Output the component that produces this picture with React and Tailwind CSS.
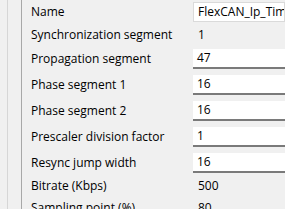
import React from "react";

// timing settings for the CAN controller, laid out like the property grid
const rows = [
  { label: "Name", value: "FlexCAN_Ip_TimingConfig", kind: "readonly", h: "h-[24px]" },
  { label: "Synchronization segment", value: "1", kind: "text", h: "h-[22px]" },
  { label: "Propagation segment", value: "47", kind: "input", h: "h-[26px]" },
  { label: "Phase segment 1", value: "16", kind: "input", h: "h-[26px]" },
  { label: "Phase segment 2", value: "16", kind: "input", h: "h-[26px]" },
  { label: "Prescaler division factor", value: "1", kind: "input", h: "h-[26px]" },
  { label: "Resync jump width", value: "16", kind: "input", h: "h-[25px]" },
  { label: "Bitrate (Kbps)", value: "500", kind: "text", h: "h-[22px]" },
  { label: "Sampling point (%)", value: "80", kind: "text", h: "h-[22px]" },
];

const App = () => {
  return (
    <div
      className="flex w-[285px] h-[209px] overflow-hidden bg-[#f0f0f0] text-[12px] text-black"
      style={{ fontFamily: "'Segoe UI', 'Open Sans', 'Noto Sans', sans-serif" }}
    >
      <div className="w-[8px] shrink-0 border-r border-[#d6d6d6]"></div>
      <div className="w-[14px] shrink-0 border-r border-[#a8a8a8]"></div>
      <div className="flex flex-col pl-[9px] flex-1 min-w-0">
        {rows.map((row, index) => (
          <div key={index} className={`flex items-center shrink-0 ${row.h}`}>
            <div className="w-[162px] shrink-0 whitespace-nowrap">{row.label}</div>
            {row.kind === "readonly" ? (
              <div className="flex items-center h-[20px] flex-1 pl-[4px] bg-white border border-[#dadada] whitespace-nowrap overflow-hidden">
                {row.value}
              </div>
            ) : row.kind === "input" ? (
              <div className="flex items-center h-[20px] flex-1 pl-[4px] bg-white border-b-2 border-[#7a7a7a] whitespace-nowrap">
                {row.value}
              </div>
            ) : (
              <div className="pl-[5px]">{row.value}</div>
            )}
          </div>
        ))}
      </div>
    </div>
  );
};

export default App;
